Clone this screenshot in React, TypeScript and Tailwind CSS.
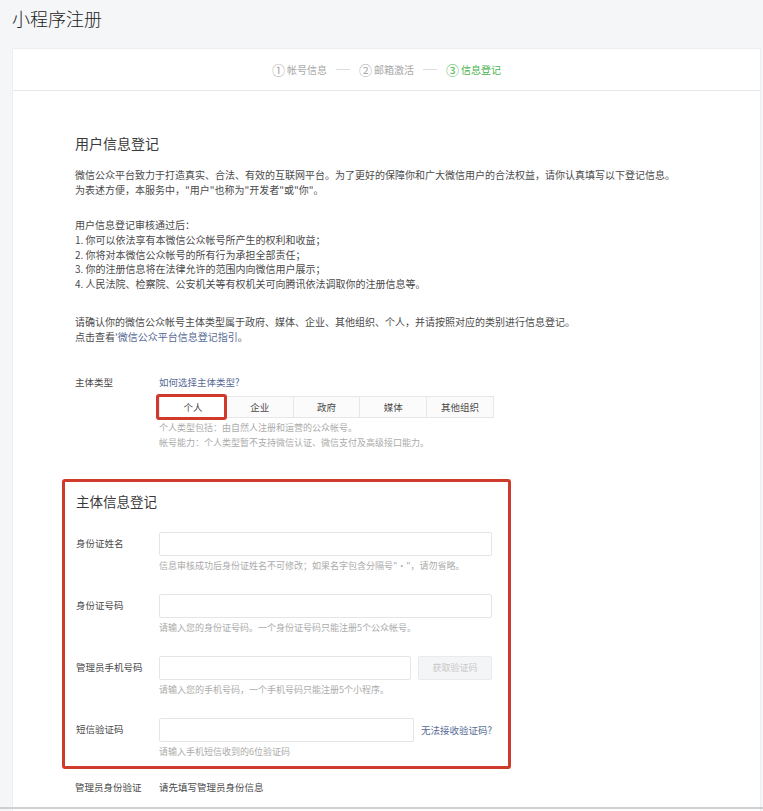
import React from "react";

const font = { fontFamily: '"Noto Sans CJK SC", "Noto Sans", sans-serif' };

function Row({
  label,
  helper,
  children,
  mt,
}: {
  label: string;
  helper: string;
  children: React.ReactNode;
  mt: string;
}) {
  return (
    <div className={`flex ${mt}`}>
      <div className="w-[83px] shrink-0 pt-[4px] text-[9.5px] leading-[15px] text-[#4a4a4a]">{label}</div>
      <div className="flex flex-col">
        {children}
        <div className="mt-[3px] text-[9px] leading-[14px] text-[#ababab]">{helper}</div>
      </div>
    </div>
  );
}

function Step({ n, text, active }: { n: string; text: string; active?: boolean }) {
  return (
    <span className={`flex items-center ${active ? "text-[#4bb34f]" : "text-[#a8a8a8]"}`}>
      <span className="text-[13px] leading-none mr-[2px]">{n}</span>
      {text}
    </span>
  );
}

export default function App() {
  return (
    <div className="h-[811px] w-[763px] overflow-hidden bg-[#f5f6f8] flex flex-col" style={font}>
      <div className="h-[48px] shrink-0 pl-[12px] text-[18px] leading-[36px] font-light text-[#222]">小程序注册</div>
      <div className="ml-[12px] w-[749px] flex-1 bg-white border-l border-r border-t border-[#eceef1] flex flex-col">
        <div className="h-[42px] shrink-0 border-b border-[#e7e7eb] flex items-center justify-center text-[10px]">
          <Step n="①" text="帐号信息" />
          <span className="mx-[9px] h-px w-[14px] bg-[#dcdcdc]" />
          <Step n="②" text="邮箱激活" />
          <span className="mx-[9px] h-px w-[14px] bg-[#dcdcdc]" />
          <Step n="③" text="信息登记" active />
        </div>
        <div className="flex-1 pl-[62px] pt-[42px]">
          <div className="text-[14px] leading-[20px] text-[#3a3a3a]">用户信息登记</div>
          <div className="mt-[14px] text-[10px] leading-[15px] text-[#4a4a4a]">
            <div>微信公众平台致力于打造真实、合法、有效的互联网平台。为了更好的保障你和广大微信用户的合法权益，请你认真填写以下登记信息。</div>
            <div>为表述方便，本服务中，"用户"也称为"开发者"或"你"。</div>
          </div>
          <div className="mt-[21px] text-[10px] leading-[14.8px] text-[#4a4a4a]">
            <div>用户信息登记审核通过后：</div>
            <div>1. 你可以依法享有本微信公众帐号所产生的权利和收益；</div>
            <div>2. 你将对本微信公众帐号的所有行为承担全部责任；</div>
            <div>3. 你的注册信息将在法律允许的范围内向微信用户展示；</div>
            <div>4. 人民法院、检察院、公安机关等有权机关可向腾讯依法调取你的注册信息等。</div>
          </div>
          <div className="mt-[22px] text-[10px] leading-[15px] text-[#4a4a4a]">
            <div>请确认你的微信公众帐号主体类型属于政府、媒体、企业、其他组织、个人，并请按照对应的类别进行信息登记。</div>
            <div>
              点击查看<span className="text-[#576b95]">'微信公众平台信息登记指引</span>。
            </div>
          </div>
          <div className="mt-[31px] flex">
            <div className="w-[84px] shrink-0 text-[9.5px] leading-[15px] text-[#4a4a4a]">主体类型</div>
            <div className="flex flex-col">
              <div className="text-[9.5px] leading-[15px] text-[#576b95]">如何选择主体类型?</div>
              <div className="relative mt-[6px] flex h-[22px] w-[335px] border border-[#e7e7eb] text-[9.5px] text-[#4a4a4a]">
                {["个人", "企业", "政府", "媒体", "其他组织"].map((t, i) => (
                  <div
                    key={t}
                    className={`flex flex-1 items-center justify-center ${i > 0 ? "border-l border-[#e7e7eb]" : ""} ${i === 0 ? "bg-white" : "bg-[#fbfbfb]"}`}
                  >
                    {t}
                  </div>
                ))}
                <div className="absolute left-[-4px] top-[-3px] h-[26px] w-[71px] rounded-[3px] border-[3px] border-[#cf3a2c]" />
              </div>
              <div className="mt-[2px] text-[9px] leading-[15px] text-[#ababab]">
                <div>个人类型包括：由自然人注册和运营的公众帐号。</div>
                <div>帐号能力：个人类型暂不支持微信认证、微信支付及高级接口能力。</div>
              </div>
            </div>
          </div>
          <div className="mt-[29px] ml-[-13px] w-[449px] rounded-[3px] border-[3px] border-[#cf3a2c] pl-[11px] pt-[9px] pb-[7px]">
            <div className="text-[13.5px] leading-[20px] text-[#3a3a3a]">主体信息登记</div>
            <Row label="身份证姓名" helper={'信息审核成功后身份证姓名不可修改；如果名字包含分隔号"·"，请勿省略。'} mt="mt-[21px]">
              <div className="h-[24px] w-[333px] rounded-[2px] border border-[#e4e5e9] bg-white" />
            </Row>
            <Row label="身份证号码" helper="请输入您的身份证号码。一个身份证号码只能注册5个公众帐号。" mt="mt-[21px]">
              <div className="h-[24px] w-[333px] rounded-[2px] border border-[#e4e5e9] bg-white" />
            </Row>
            <Row label="管理员手机号码" helper="请输入您的手机号码，一个手机号码只能注册5个小程序。" mt="mt-[21px]">
              <div className="flex gap-[7px]">
                <div className="h-[24px] w-[252px] rounded-[2px] border border-[#e4e5e9] bg-white" />
                <div className="flex h-[24px] w-[74px] items-center justify-center rounded-[2px] border border-[#e9eaec] bg-[#f4f5f6] text-[9px] text-[#c8c8c8]">
                  获取验证码
                </div>
              </div>
            </Row>
            <Row label="短信验证码" helper="请输入手机短信收到的6位验证码" mt="mt-[21px]">
              <div className="flex items-center gap-[7px]">
                <div className="h-[24px] w-[255px] rounded-[2px] border border-[#e4e5e9] bg-white" />
                <div className="text-[9.5px] text-[#576b95]">无法接收验证码?</div>
              </div>
            </Row>
          </div>
          <div className="mt-[11px] flex text-[9.5px] leading-[15px] text-[#4a4a4a]">
            <div className="w-[84px] shrink-0">管理员身份验证</div>
            <div>请先填写管理员身份信息</div>
          </div>
        </div>
      </div>
      <div className="absolute left-0 top-[807px] h-[2px] w-[763px] bg-[#cfcfcf]" />
    </div>
  );
}
